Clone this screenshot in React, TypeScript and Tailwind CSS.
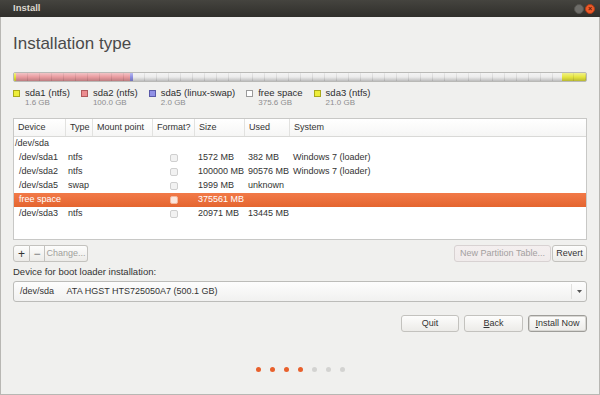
import React from "react";

const parts = [
  { name: "sda1 (ntfs)", size: "1.6 GB", gb: 1.6, bar: "bg-[#e4e436]", box: "bg-[#eeee3a] border-[#a9a91c]" },
  { name: "sda2 (ntfs)", size: "100.0 GB", gb: 100, bar: "bg-[#ea9ca0]", box: "bg-[#ec8d90] border-[#b05a5c]" },
  { name: "sda5 (linux-swap)", size: "2.0 GB", gb: 2, bar: "bg-[#8e8fe4]", box: "bg-[#9191e6] border-[#5a5aa8]" },
  { name: "free space", size: "375.6 GB", gb: 375.6, bar: "bg-[#ececec]", box: "bg-white border-[#9a9a9a]" },
  { name: "sda3 (ntfs)", size: "21.0 GB", gb: 21, bar: "bg-[#e6e640]", box: "bg-[#eeee3a] border-[#a9a91c]" },
];

const rows = [
  { dev: "/dev/sda1", type: "ntfs", size: "1572 MB", used: "382 MB", sys: "Windows 7 (loader)" },
  { dev: "/dev/sda2", type: "ntfs", size: "100000 MB", used: "90576 MB", sys: "Windows 7 (loader)" },
  { dev: "/dev/sda5", type: "swap", size: "1999 MB", used: "unknown", sys: "" },
  { dev: "free space", type: "", size: "375561 MB", used: "", sys: "", sel: true },
  { dev: "/dev/sda3", type: "ntfs", size: "20971 MB", used: "13445 MB", sys: "" },
];

const cols = "grid grid-cols-[52px_27px_60px_42px_50px_45px_1fr]";
// base button look; text colour is set per button
const btn =
  "h-[17px] flex items-center justify-center border rounded-[3px] bg-linear-to-b text-[9px]";
const normal = "border-[#c3c2be] from-[#fdfdfc] to-[#ecebe8] text-[#333]";

function PartitionBar() {
  const total = parts.reduce((s, p) => s + p.gb, 0);
  return (
    <div className="h-[10px] w-full flex rounded-[2px] overflow-hidden border border-[#b9b9b6]">
      {parts.map((p) => (
        <div
          key={p.name}
          className={`relative h-full ${p.bar}`}
          style={{ width: `${(p.gb / total) * 100}%`, minWidth: 2 }}
        >
          <div className="absolute inset-0 bg-[repeating-linear-gradient(90deg,transparent_0_11px,rgba(0,0,0,0.09)_11px_12px)]" />
          <div className="absolute inset-0 bg-linear-to-b from-white/40 via-transparent to-black/20" />
        </div>
      ))}
    </div>
  );
}

function Check({ sel }: { sel?: boolean }) {
  return (
    <div
      className={`w-[8px] h-[8px] rounded-[2px] border ${
        sel ? "border-[#f3b89e] bg-[#fbe6dc]" : "border-[#cfcfcf] bg-[#f2f2f2]"
      }`}
    />
  );
}

export default function App() {
  return (
    <div className="w-[600px] h-[395px] flex flex-col bg-[#f0f0ee] font-['Liberation_Sans',Arial,sans-serif] overflow-hidden">
      {/* title bar */}
      <div className="h-[17px] flex items-center justify-between px-[13px] bg-linear-to-b from-[#45443f] to-[#302f2b]">
        <span className="text-[9.5px] font-bold text-[#dcd8cf]">Install</span>
        <div className="flex gap-[1px] mr-[-8px]">
          <div className="w-[10px] h-[10px] rounded-full bg-[#6e6d69] border border-[#55544f]" />
          <div className="w-[10px] h-[10px] rounded-full bg-[#ee5b2a] border border-[#b23d16] flex items-center justify-center text-[7px] leading-none text-[#5a1a06] font-bold">
            ×
          </div>
        </div>
      </div>

      <div className="flex-1 flex flex-col px-[12px] border-x border-b border-[#b8b7b3]">
        <h1 className="mt-[17px] text-[17px] leading-[20px] text-[#4a4a4a]">Installation type</h1>

        <div className="mt-[18px]">
          <PartitionBar />
        </div>

        {/* legend */}
        <div className="mt-[5px] flex gap-[11px]">
          {parts.map((p) => (
            <div key={p.name} className="flex gap-[5px]">
              <div className={`mt-[3px] w-[7px] h-[7px] border ${p.box}`} />
              <div className="flex flex-col">
                <span className="text-[9.5px] leading-[12px] text-[#2e2e2e]">{p.name}</span>
                <span className="text-[8px] leading-[8px] text-[#8e8e8e]">{p.size}</span>
              </div>
            </div>
          ))}
        </div>

        {/* partition table */}
        <div className="mt-[11px] h-[122px] border border-[#c8c8c6] bg-white text-[9px] text-[#333]">
          <div className={`${cols} h-[18px] border-b border-[#d9d9d7] bg-linear-to-b from-white to-[#f6f6f5]`}>
            {["Device", "Type", "Mount point", "Format?", "Size", "Used", "System"].map((h, i) => (
              <div
                key={h}
                className={`flex items-center pl-[4px] ${i < 6 ? "border-r border-[#e2e2e0]" : ""}`}
              >
                {h}
              </div>
            ))}
          </div>
          <div className="h-[14px] flex items-center pl-[1px]">/dev/sda</div>
          {rows.map((r) => (
            <div
              key={r.dev}
              className={`${cols} h-[14px] items-center ${
                r.sel ? "bg-linear-to-b from-[#f27a48] to-[#e4652f] text-white" : ""
              }`}
            >
              <div className="pl-[5px]">{r.dev}</div>
              <div className="pl-[2px]">{r.type}</div>
              <div />
              <div className="flex justify-center">
                <Check sel={r.sel} />
              </div>
              <div className="pl-[3px]">{r.size}</div>
              <div className="pl-[3px]">{r.used}</div>
              <div className="pl-[3px]">{r.sys}</div>
            </div>
          ))}
        </div>

        {/* table buttons */}
        <div className="mt-[5px] flex justify-between">
          <div className="flex">
            <div className={`${btn} ${normal} w-[17px] rounded-r-none text-[12px]`}>+</div>
            <div className={`${btn} w-[15px] rounded-none border-l-0 border-[#c3c2be] from-[#fdfdfc] to-[#ecebe8] text-[12px] text-[#777]`}>
              −
            </div>
            <div className={`${btn} w-[43px] rounded-l-none border-l-0 border-[#c3c2be] from-[#fdfdfc] to-[#ecebe8] text-[#a09f9c]`}>
              Change...
            </div>
          </div>
          <div className="flex gap-[1px]">
            <div className={`${btn} w-[97px] from-[#f4efef] to-[#f0ebeb] border-[#d8d2d2] text-[#a3a09f]`}>
              New Partition Table...
            </div>
            <div className={`${btn} ${normal} w-[35px]`}>Revert</div>
          </div>
        </div>

        <div className="mt-[4px] text-[9.5px] leading-[12px] text-[#333]">Device for boot loader installation:</div>

        <div className="mt-[3px] h-[21px] flex items-center border border-[#bcbcb9] rounded-[3px] bg-linear-to-b from-[#fdfdfd] to-[#f1f1f0] text-[9px] text-[#333]">
          <span className="pl-[6px] flex-1">
            /dev/sda&nbsp;&nbsp;&nbsp;&nbsp;&nbsp;ATA HGST HTS725050A7 (500.1 GB)
          </span>
          <div className="w-[15px] h-[15px] border-l border-[#e0e0de] flex items-center justify-center">
            <svg width="5" height="3" viewBox="0 0 5 3">
              <path d="M0 0h5L2.5 3z" fill="#555" />
            </svg>
          </div>
        </div>

        <div className="mt-[13px] flex justify-end gap-[5px]">
          <div className={`${btn} ${normal} w-[58px]`}>Quit</div>
          <div className={`${btn} ${normal} w-[59px]`}>
            <span className="underline">B</span>ack
          </div>
          <div className={`${btn} w-[59px] border-[#9e9d99] from-[#fdfdfc] to-[#ecebe8] text-[#333] shadow-[inset_0_0_0_1px_#d8d7d3]`}>
            <span className="underline">I</span>nstall Now
          </div>
        </div>

        <div className="mt-[35px] flex justify-center gap-[9px] pl-[1px]">
          {[0, 1, 2, 3, 4, 5, 6].map((i) => (
            <div
              key={i}
              className={`w-[5px] h-[5px] rounded-full ${i < 4 ? "bg-[#e8602c]" : "bg-[#d3d3d1]"}`}
            />
          ))}
        </div>
      </div>
    </div>
  );
}
